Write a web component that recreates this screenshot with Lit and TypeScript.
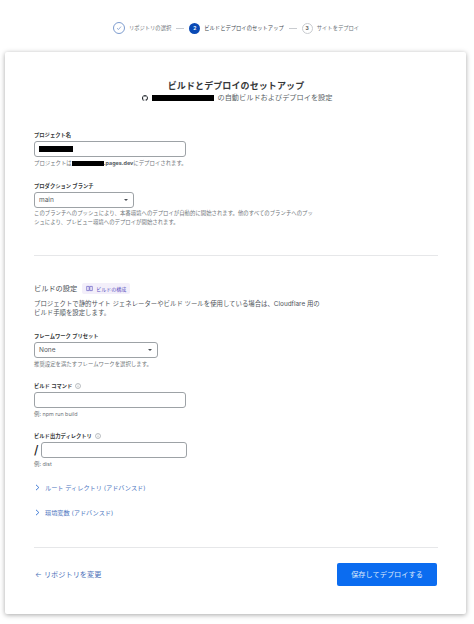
import { LitElement, html, css, svg } from "lit";
import { customElement } from "lit/decorators.js";

const info = html`<svg class="info" viewBox="0 0 12 12"><circle cx="6" cy="6" r="5" fill="none" stroke="#7a8087" stroke-width="1"/><path d="M6 5.2v3.4M6 3.2v1" stroke="#7a8087" stroke-width="1" fill="none"/></svg>`;
const chev = html`<svg class="chev" viewBox="0 0 6 8"><path d="M1.2 .8 4.6 4 1.2 7.2" fill="none" stroke="#2f6fd0" stroke-width="1.1"/></svg>`;
const caret = html`<span class="caret"></span>`;
const gh = svg`<path fill="#24292f" d="M8 .2a8 8 0 0 0-2.5 15.6c.4.1.5-.2.5-.4v-1.4c-2.2.5-2.7-1-2.7-1-.4-.9-.9-1.200-.9-1.200-.7-.5.1-.5.1-.5.8.1 1.200.8 1.200.8.7 1.200 1.900.9 2.300.7.1-.5.3-.9.5-1.100-1.800-.2-3.600-.9-3.600-4 0-.9.3-1.600.8-2.100-.1-.2-.4-1 .1-2.100 0 0 .7-.2 2.200.8a7.600 7.600 0 0 1 4 0c1.500-1 2.200-.8 2.200-.8.5 1.100.2 1.900.1 2.100.5.6.8 1.300.8 2.100 0 3.100-1.900 3.700-3.700 3.900.3.3.6.8.6 1.500v2.200c0 .2.100.5.6.4A8 8 0 0 0 8 .2Z"/>`;

@customElement("app-root")
export class AppRoot extends LitElement {
  static styles = css`
    :host { display: block; width: 474px; height: 624px; overflow: hidden; background: #fff;
      font-family: "Inter", "Noto Sans CJK JP", "Liberation Sans", sans-serif; color: #36393a; box-sizing: border-box; }
    .stepper { height: 52px; display: flex; align-items: center; justify-content: center; gap: 5px; padding: 4px 2px 0 0; box-sizing: border-box; font-size: 5.3px; color: #6b7278; }
    .stepper .step { display: flex; align-items: center; gap: 4px; }
    .bubble { width: 11px; height: 11px; border-radius: 50%; box-sizing: border-box; display: flex; align-items: center; justify-content: center; font-size: 5px; font-weight: 700; }
    .done { width: 12px; height: 12px; border: 1px solid #7d9ccf; color: #7d9ccf; }
    .current { background: #0a4ab5; color: #fff; }
    .next { border: 1px solid #c9ccd0; color: #555; }
    .stepper .line { width: 8px; height: 1px; background: #c9ccd0; }
    .stepper .active { color: #444b52; }
    .card { margin: 0 8px 10px 5px; height: 562px; background: #fff; border-radius: 2px; box-shadow: 0 1px 5px rgba(0,0,0,.35); padding: 0 28px 0 29px; box-sizing: border-box; display: flex; flex-direction: column; }
    .head { padding-top: 28px; text-align: center; height: 79px; box-sizing: border-box; }
    h1 { margin: 0; font-size: 9px; line-height: 12px; font-weight: 700; color: #36393a; letter-spacing: .1px; }
    .sub { margin-top: 0; font-size: 7.2px; line-height: 11px; color: #595f66; display: flex; justify-content: center; align-items: center; gap: 3px; padding-left: 3px; }
    .sub svg { width: 6px; height: 6px; margin-right: 1px; }
    .black { background: #000; display: inline-block; }
    .b1 { width: 62px; height: 6px; }
    .b2 { width: 34px; height: 6px; }
    .b3 { width: 32px; height: 5px; vertical-align: -0.5px; }
    .field { display: flex; flex-direction: column; align-items: flex-start; }
    .label { font-size: 5.3px; line-height: 8px; font-weight: 700; color: #36393a; display: flex; align-items: center; gap: 3px; }
    .info { width: 6px; height: 6px; }
    .input { border: 1px solid #9da2a6; border-radius: 3px; background: #fff; box-sizing: border-box; height: 16px; width: 152px; margin-top: 2px; display: flex; align-items: center; padding: 0 4px; font-size: 6.5px; color: #555b61; }
    .select { justify-content: space-between; }
    .w100 { width: 100px; }
    .w124 { width: 124px; }
    .caret { width: 0; height: 0; border-left: 2px solid transparent; border-right: 2px solid transparent; border-top: 2.5px solid #4a4f54; margin-right: 1px; }
    .hint { font-size: 5.4px; line-height: 9px; color: #6f757a; margin-top: 2px; }
    .hint b { color: #555b61; font-weight: 700; }
    .wide { width: 283px; margin-top: 1px; }
    .rule { height: 1px; background: #e6e7e9; width: 404px; flex: none; }
    .title-row { display: flex; align-items: center; gap: 5px; height: 14px; }
    .title { font-size: 7.2px; color: #4a4f54; }
    .pill { display: inline-flex; align-items: center; gap: 3px; height: 11px; padding: 0 4px; background: #f3effa; border-radius: 2px; color: #5a4fc0; font-size: 5px; }
    .pill svg { width: 7px; height: 7px; }
    .desc { font-size: 6.4px; line-height: 9px; color: #4f555b; width: 290px; margin-top: 4.5px; }
    .slash-row { display: flex; align-items: center; gap: 2px; margin-top: 2px; }
    .slash-row .input { margin: 0; width: 146px; }
    .slash { font-size: 12px; font-weight: 500; width: 5px; color: #222; line-height: 16px; }
    .adv { display: flex; align-items: center; gap: 5px; color: #4d76c0; font-size: 6.2px; line-height: 10px; padding-left: 1px; }
    .chev { width: 5px; height: 7px; }
    .foot { display: flex; justify-content: space-between; align-items: center; width: 404px; box-sizing: border-box; padding: 0 1px; margin-top: 15px; }
    .back { color: #4a6fb8; font-size: 7.2px; }
    .btn { width: 100px; height: 23px; background: #0b6cf0; color: #dbe8fb; border-radius: 2px; display: flex; align-items: center; justify-content: center; font-size: 7.2px; }
    .m1 { margin-top: 14px; } .m2 { margin-top: 28px; } .m3 { margin-top: 25px; } .m4 { margin-top: 14px; } .m5 { margin-top: 13px; } .m6 { margin-top: 13px; } .m7 { margin-top: 15px; } .m8 { margin-top: 14px; } .m9 { margin-top: 29px; }
  `;

  render() {
    return html`
      <div class="stepper">
        <div class="step"><div class="bubble done"><svg width="6" height="6" viewBox="0 0 6 6"><path d="M1 3.2 2.5 4.5 5 1.6" fill="none" stroke="#7d9ccf" stroke-width=".8"/></svg></div><span>リポジトリの選択</span></div>
        <div class="line"></div>
        <div class="step"><div class="bubble current">2</div><span class="active">ビルドとデプロイのセットアップ</span></div>
        <div class="line"></div>
        <div class="step"><div class="bubble next">3</div><span>サイトをデプロイ</span></div>
      </div>
      <div class="card">
        <div class="head">
          <h1>ビルドとデプロイのセットアップ</h1>
          <div class="sub"><svg viewBox="0 0 16 16">${gh}</svg><span class="black b1"></span><span>の自動ビルドおよびデプロイを設定</span></div>
        </div>
        <div class="field">
          <div class="label">プロジェクト名</div>
          <div class="input"><span class="black b2"></span></div>
          <div class="hint">プロジェクトは<span class="black b3"></span><b>.pages.dev</b>にデプロイされます。</div>
        </div>
        <div class="field m1">
          <div class="label">プロダクション ブランチ</div>
          <div class="input select w100">main ${caret}</div>
          <div class="hint wide">このブランチへのプッシュにより、本番環境へのデプロイが自動的に開始されます。他のすべてのブランチへのプッシュにより、プレビュー環境へのデプロイが開始されます。</div>
        </div>
        <div class="rule m2"></div>
        <div class="m3">
          <div class="title-row"><span class="title">ビルドの設定</span><span class="pill"><svg viewBox="0 0 10 10"><path d="M1 2h3.5v6H1zM5.5 2H9v6H5.5z" fill="none" stroke="#5a4fc0" stroke-width=".9"/></svg>ビルドの構成</span></div>
          <div class="desc">プロジェクトで静的サイト ジェネレーターやビルド ツールを使用している場合は、Cloudflare 用のビルド手順を設定します。</div>
        </div>
        <div class="field m4">
          <div class="label">フレームワーク プリセット</div>
          <div class="input select w124">None ${caret}</div>
          <div class="hint">推奨設定を満たすフレームワークを選択します。</div>
        </div>
        <div class="field m5">
          <div class="label">ビルド コマンド ${info}</div>
          <div class="input"></div>
          <div class="hint">例: npm run build</div>
        </div>
        <div class="field m6">
          <div class="label">ビルド出力ディレクトリ ${info}</div>
          <div class="slash-row"><span class="slash">/</span><div class="input"></div></div>
          <div class="hint">例: dist</div>
        </div>
        <div class="adv m8">${chev}<span>ルート ディレクトリ (アドバンスド)</span></div>
        <div class="adv m7">${chev}<span>環境変数 (アドバンスド)</span></div>
        <div class="rule m9"></div>
        <div class="foot"><span class="back">← リポジトリを変更</span><div class="btn">保存してデプロイする</div></div>
      </div>
    `;
  }
}
